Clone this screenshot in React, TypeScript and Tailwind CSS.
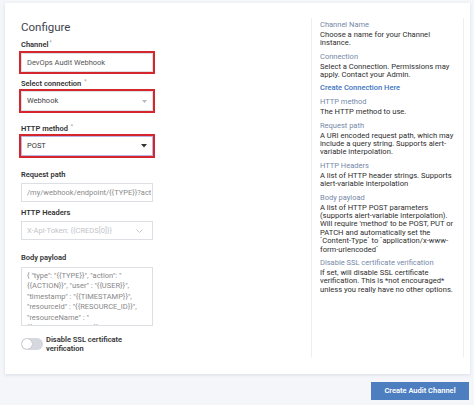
import React from "react";

const font = { fontFamily: "Roboto, 'Liberation Sans', sans-serif" };

function Req() {
    return <span className="relative -top-[3px] ml-[1px] text-[5px] text-[#9a9a9a]">*</span>;
}

function Label({ children, className = "" }: { children: React.ReactNode; className?: string }) {
    return (
        <div className={`text-[7.5px] leading-[10px] font-semibold text-[#333] ${className}`}>{children}</div>
    );
}

function Help({ title, lines }: { title: string; lines: string[] }) {
    return (
        <div className="mb-[2px]">
            <div className="text-[7.5px] leading-[13px] text-[#7589a8] whitespace-nowrap">{title}</div>
            {lines.map((l) => (
                <div key={l} className="text-[7.6px] leading-[8.4px] text-[#2e2e2e] whitespace-nowrap">
                    {l}
                </div>
            ))}
        </div>
    );
}

export default function App() {
    const payload = [
        '{ "type": "{{TYPE}}", "action": "',
        '{{ACTION}}", "user" : "{{USER}}",',
        '"timestamp" : "{{TIMESTAMP}}",',
        '"resourceId" : "{{RESOURCE_ID}}",',
        '"resourceName" : "',
        '{{RESOURCE_NAME}}",',
    ];

    return (
        <div className="min-h-screen bg-[#f4f6f9] pl-[5px] pr-[4px] pt-[3px]" style={font}>
            {/* Card */}
            <div className="flex items-start bg-white pl-[16px] pr-[6px] pt-[15px] pb-[17px] shadow-[0_1px_3px_rgba(60,80,120,0.15)]">
                {/* Form column */}
                <div className="w-[132px] shrink-0">
                    <h1 className="mt-[1px] text-[11.5px] leading-[16px] font-normal text-[#3e4450]">Configure</h1>

                    <Label className="mt-[5px]">
                        Channel
                        <Req />
                    </Label>
                    <div className="mt-[3px] flex h-[19px] items-center border border-[#dcdfe4] pl-[5px] text-[7.5px] text-[#555] outline-2 outline-[#d4262c]">
                        DevOps Audit Webhook
                    </div>

                    <Label className="mt-[7px]">
                        Select connection <Req />
                    </Label>
                    <div className="mt-[2px] flex h-[20px] items-center justify-between border border-[#dcdfe4] pl-[5px] pr-[5px] text-[7.5px] text-[#444] outline-2 outline-[#d4262c]">
                        <span>Webhook</span>
                        <svg width="5" height="3" viewBox="0 0 5 3">
                            <polygon points="0,0 5,0 2.5,3" fill="#b5b8bf" />
                        </svg>
                    </div>

                    <Label className="mt-[13px]">
                        HTTP method <Req />
                    </Label>
                    <div className="mt-[2px] flex h-[20px] items-center justify-between border border-[#b9b5e2] pl-[5px] pr-[5px] text-[7.5px] text-[#333] outline-2 outline-[#d4262c]">
                        <span>POST</span>
                        <svg width="6" height="3.5" viewBox="0 0 6 3.5">
                            <polygon points="0,0 6,0 3,3.5" fill="#333" />
                        </svg>
                    </div>

                    <Label className="mt-[14px]">Request path</Label>
                    <div className="mt-[3px] flex h-[19px] items-center overflow-hidden whitespace-nowrap border border-[#dcdfe4] pl-[5px] text-[7.5px] text-[#8a8a8a]">
                        /my/webhook/endpoint/{"{{TYPE}}"}?act
                    </div>

                    <Label className="mt-[6px]">HTTP Headers</Label>
                    <div className="mt-[3px] flex h-[19px] items-center justify-between border border-[#dcdfe4] pl-[5px] pr-[9px] text-[7.5px] text-[#c2c4c8]">
                        <span>X-Api-Token: {"{{CREDS[0]}}"}</span>
                        <svg width="7" height="4" viewBox="0 0 7 4">
                            <polyline points="0.5,0.5 3.5,3.5 6.5,0.5" fill="none" stroke="#b8bbc0" strokeWidth="0.8" />
                        </svg>
                    </div>

                    <Label className="mt-[13px]">Body payload</Label>
                    <div className="mt-[4px] h-[59px] overflow-hidden border border-[#dcdfe4] pl-[5px] pt-[3px] text-[7.5px] leading-[10.4px] text-[#888]">
                        {payload.map((l) => (
                            <div key={l} className="whitespace-nowrap">
                                {l}
                            </div>
                        ))}
                    </div>

                    <div className="mt-[9px] flex items-center gap-[3px]">
                        <div className="flex h-[12px] w-[22px] shrink-0 items-center rounded-full bg-[#d5d8de] px-[1px]">
                            <div className="h-[10px] w-[10px] rounded-full bg-white shadow-[0_0_1px_rgba(0,0,0,0.3)]" />
                        </div>
                        <div className="text-[7.5px] leading-[9px] font-semibold text-[#333]">
                            Disable SSL certificate
                            <br />
                            verification
                        </div>
                    </div>
                </div>

                {/* Help panel */}
                <div className="ml-[158px] h-[339px] w-[153px] shrink-0 border-x border-[#eceef1] pl-[8px]">
                    <Help title="Channel Name" lines={["Choose a name for your Channel", "instance."]} />
                    <div className="mb-[2px]">
                        <div className="text-[7.5px] leading-[13px] text-[#7589a8]">Connection</div>
                        <div className="text-[7.6px] leading-[8.4px] text-[#2e2e2e]">Select a Connection. Permissions may</div>
                        <div className="text-[7.6px] leading-[8.4px] text-[#2e2e2e]">apply. Contact your Admin.</div>
                        <div className="mt-[2.5px] text-[7.5px] leading-[11px] font-medium text-[#3d74c0]">
                            Create Connection Here
                        </div>
                    </div>
                    <Help title="HTTP method" lines={["The HTTP method to use."]} />
                    <Help
                        title="Request path"
                        lines={[
                            "A URI encoded request path, which may",
                            "include a query string. Supports alert-",
                            "variable interpolation.",
                        ]}
                    />
                    <Help
                        title="HTTP Headers"
                        lines={["A list of HTTP header strings. Supports", "alert-variable interpolation"]}
                    />
                    <Help
                        title="Body payload"
                        lines={[
                            "A list of HTTP POST parameters",
                            "(supports alert-variable interpolation).",
                            "Will require 'method' to be POST, PUT or",
                            "PATCH and automatically set the",
                            "`Content-Type` to `application/x-www-",
                            "form-urlencoded`",
                        ]}
                    />
                    <Help
                        title="Disable SSL certificate verification"
                        lines={[
                            "If set, will disable SSL certificate",
                            "verification. This is *not encouraged*",
                            "unless you really have no other options.",
                        ]}
                    />
                </div>
            </div>

            {/* Footer */}
            <div className="mt-[8px] flex justify-end pr-[1px]">
                <button className="h-[18px] w-[98px] bg-[#4d7ebf] text-[7.5px] font-semibold text-white">
                    Create Audit Channel
                </button>
            </div>
        </div>
    );
}
